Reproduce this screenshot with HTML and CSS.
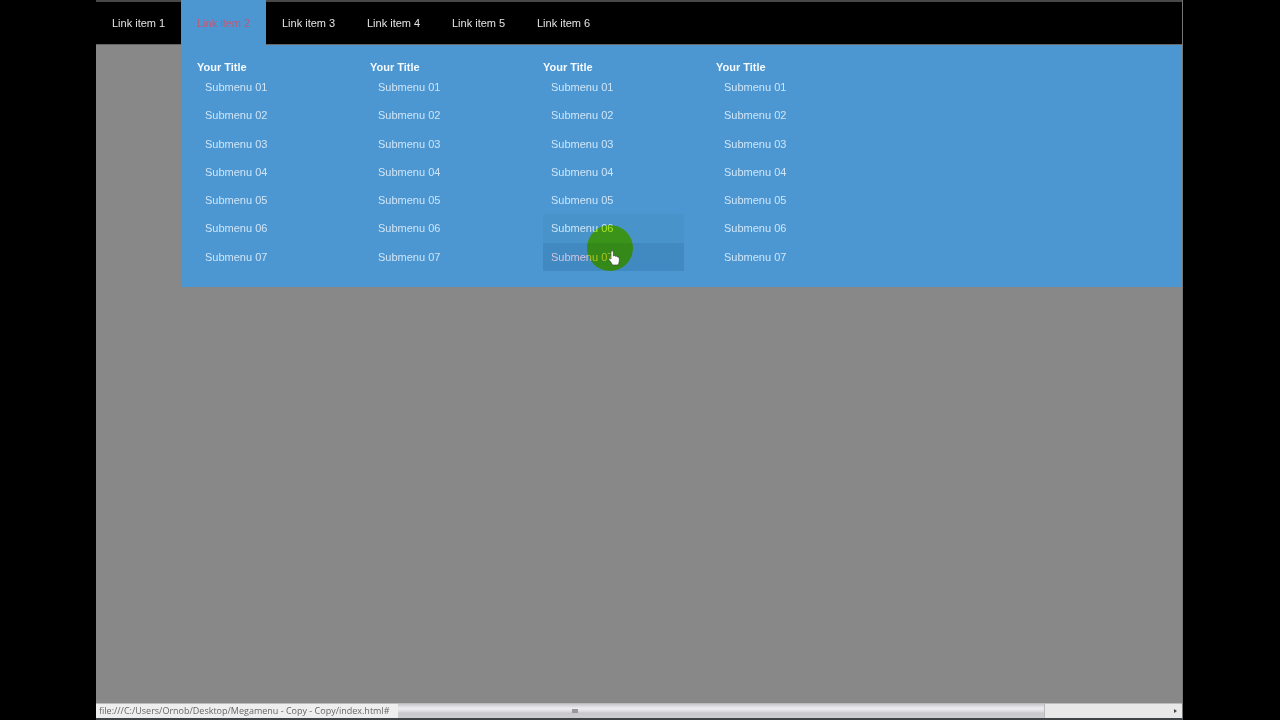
FILE: index.html
```html
<!DOCTYPE html>
<html lang="en">
<head>
    <meta charset="UTF-8">
    <meta name="viewport" content="width=device-width, initial-scale=1.0">
    <title>Megamenu</title>
    <link rel="stylesheet" href="styles.css">
</head>
<body>
    <div class="screen">
        <nav class="nav">
            <a href="#">Link item 1</a>
            <a href="#" class="active">Link item 2</a>
            <a href="#">Link item 3</a>
            <a href="#">Link item 4</a>
            <a href="#">Link item 5</a>
            <a href="#">Link item 6</a>
        </nav>

        <main class="content">
            <div class="megamenu">
                <div class="column">
                    <h2>Your Title</h2>
                    <ul>
                        <li><a href="#">Submenu 01</a></li>
                        <li><a href="#">Submenu 02</a></li>
                        <li><a href="#">Submenu 03</a></li>
                        <li><a href="#">Submenu 04</a></li>
                        <li><a href="#">Submenu 05</a></li>
                        <li><a href="#">Submenu 06</a></li>
                        <li><a href="#">Submenu 07</a></li>
                    </ul>
                </div>
                <div class="column">
                    <h2>Your Title</h2>
                    <ul>
                        <li><a href="#">Submenu 01</a></li>
                        <li><a href="#">Submenu 02</a></li>
                        <li><a href="#">Submenu 03</a></li>
                        <li><a href="#">Submenu 04</a></li>
                        <li><a href="#">Submenu 05</a></li>
                        <li><a href="#">Submenu 06</a></li>
                        <li><a href="#">Submenu 07</a></li>
                    </ul>
                </div>
                <div class="column">
                    <h2>Your Title</h2>
                    <ul>
                        <li><a href="#">Submenu 01</a></li>
                        <li><a href="#">Submenu 02</a></li>
                        <li><a href="#">Submenu 03</a></li>
                        <li><a href="#">Submenu 04</a></li>
                        <li><a href="#">Submenu 05</a></li>
                        <li><a href="#" class="fading">Submenu 06</a></li>
                        <li><a href="#" class="current">Submenu 07</a>
                            <span class="spot"></span>
                            <svg class="pointer" viewBox="0 0 12 16" aria-hidden="true">
                                <path d="M3 9V2.200Q3 .8 4.200 .8T5.400 2.200V6Q6.500 5 7.500 6.300Q8.800 5.500 9.500 7Q11.300 6.500 11.300 8.500V11Q11.300 13 10 15H4.500Q3.500 12.500 .8 9.500Q1 7.500 3 9Z" fill="#fff" stroke="#333" stroke-width=".6"/>
                            </svg>
                        </li>
                    </ul>
                </div>
                <div class="column">
                    <h2>Your Title</h2>
                    <ul>
                        <li><a href="#">Submenu 01</a></li>
                        <li><a href="#">Submenu 02</a></li>
                        <li><a href="#">Submenu 03</a></li>
                        <li><a href="#">Submenu 04</a></li>
                        <li><a href="#">Submenu 05</a></li>
                        <li><a href="#">Submenu 06</a></li>
                        <li><a href="#">Submenu 07</a></li>
                    </ul>
                </div>
            </div>
        </main>

        <footer class="bottom">
            <span class="status">file:///C:/Users/Ornob/Desktop/Megamenu - Copy - Copy/index.html#</span>
            <div class="scrollbar">
                <div class="thumb"><span class="grip"></span></div>
                <span class="arrow"></span>
            </div>
        </footer>
    </div>
</body>
</html>
```
FILE: styles.css
```css
* {
    box-sizing: border-box;
}
body {
    margin: 0;
    background-color: #000;
    font-family: Arial, "Liberation Sans", sans-serif;
    font-size: 11px;
}
a {
    text-decoration: none;
}
.screen {
    display: flex;
    flex-direction: column;
    min-height: 100vh;
    margin: 0 97px 0 96px;
    background-color: #888;
    border-right: 1px solid #777;
    border-bottom: 2px solid #414446;
}

/* top bar */
.nav {
    display: flex;
    background-color: #000;
    border-top: 2px solid #484848;
    border-bottom: 1px solid #666;
}
.nav a {
    width: 85px;
    padding-left: 16px;
    line-height: 42px;
    color: #e4e4e4;
    white-space: nowrap;
}
.nav .active {
    margin: -2px 0 -1px;
    padding-top: 2px;
    padding-bottom: 1px;
    background-color: #4c97d2;
    color: #b85b7c;
}

/* dropdown */
.content {
    flex: 1;
}
.megamenu {
    display: flex;
    gap: 32px;
    margin-left: 85px;
    padding: 16px;
    background-color: #4c97d2;
}
.column {
    width: 141px;
}
.column h2 {
    margin: 0;
    font-size: 11px;
    line-height: 12px;
    color: #f4faff;
}
.column ul {
    display: flex;
    flex-direction: column;
    height: 198px;
    margin: 0;
    padding: 0;
    list-style: none;
}
.column li {
    flex: 1;
    position: relative;
}
.column li a {
    display: block;
    height: 100%;
    padding: 0 8px;
    line-height: 28px;
    color: #cfe5f7;
}
.column li a.fading {
    background-color: #4993cb;
}
.column li a.current {
    background-color: #4189c1;
    color: #d3c4dc;
}

/* cursor highlight */
.spot {
    position: absolute;
    left: 44px;
    top: -18px;
    width: 46px;
    height: 46px;
    border-radius: 50%;
    background-color: #d0ff20;
    mix-blend-mode: multiply;
}
.pointer {
    position: absolute;
    left: 65px;
    top: 7px;
    width: 12px;
    height: 16px;
}

/* status and scrollbar */
.bottom {
    display: flex;
    height: 15px;
    background-color: #e8e8e8;
    border-top: 1px solid #bbb;
}
.status {
    width: 302px;
    padding-left: 3px;
    background-color: #eee;
    color: #666;
    font-family: "Open Sans", sans-serif;
    font-size: 9px;
    line-height: 14px;
    white-space: nowrap;
}
.scrollbar {
    display: flex;
    align-items: center;
    justify-content: space-between;
    flex: 1;
    padding-right: 5px;
}
.thumb {
    flex: 0 0 83%;
    height: 100%;
    background: linear-gradient(#c8c8cc, #ededf0 30%, #e0e0e4 50%, #c8c8cd 65%, #cdcdd2);
    border-right: 1px solid #bbb;
}
.grip {
    display: block;
    width: 6px;
    height: 4px;
    margin: 5px 0 0 174px;
    background-color: #999;
}
.arrow {
    border: 2px solid transparent;
    border-left: 3px solid #444;
    border-right: 0;
}
```
